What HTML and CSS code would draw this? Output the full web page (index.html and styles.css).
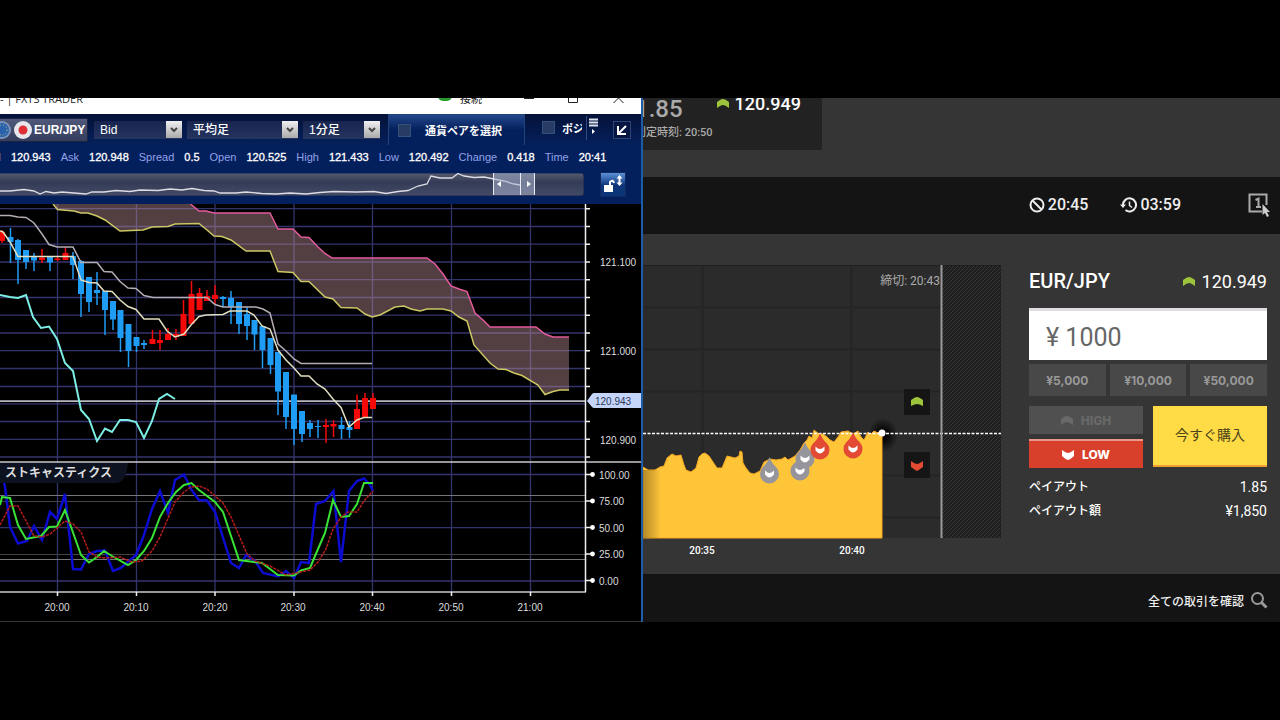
FILE: index.html
```html
<!DOCTYPE html>
<html lang="ja">
<head>
<meta charset="utf-8">
<title>FXTS TRADER</title>
<link rel="stylesheet" href="styles.css">
</head>
<body>
<main class="screen">
  <section class="trader">
    <header class="titlebar">
      <span class="titlebar-name">- | FXTS TRADER</span>
      <span class="titlebar-mid"><i class="green-dot"></i>接続</span>
      <svg class="window-icons" width="110" height="16" viewBox="520 98 110 16" fill="none" stroke="#222"><path d="M525 98.500h10M569.500 94v8.500h9V94M614.500 103l10-10M614.500 93l10 10"/></svg>
    </header>
    <div class="toolbar">
      <button class="pair"><svg width="34" height="20" viewBox="0 0 34 20"><circle cx="2" cy="10" r="9" fill="#7a91b8"/><circle cx="2" cy="10" r="7" fill="#2862ae"/><circle cx="2" cy="10" r="5" fill="none" stroke="#cfc46a" stroke-dasharray="1 2"/><circle cx="23" cy="10" r="9" fill="#e6e6ec"/><circle cx="23" cy="10" r="4.500" fill="#de2f35"/></svg>EUR/JPY</button>
      <label class="drop drop-bid"><select aria-label="価格"><option>Bid</option></select><svg viewBox="0 0 16 16"><path d="M5 6.500l3 3 3-3"/></svg></label>
      <label class="drop drop-type"><select aria-label="足種"><option>平均足</option></select><svg viewBox="0 0 16 16"><path d="M5 6.500l3 3 3-3"/></svg></label>
      <label class="drop drop-span"><select aria-label="時間足"><option>1分足</option></select><svg viewBox="0 0 16 16"><path d="M5 6.500l3 3 3-3"/></svg></label>
      <label class="tab"><input type="checkbox">通貨ペアを選択</label>
      <label class="tab tab-position"><input type="checkbox"><span>ポジ</span></label>
      <svg class="list-icon" width="12" height="24" viewBox="0 0 12 24"><path d="M.5 0v24" stroke="#304b80"/><path d="M3 3.500h9M3 6.500h9M3 9.500h9" stroke="#dce0ec" stroke-width="2"/><path d="M6 13l3 2.500-3 2.500z" fill="#fff"/></svg>
      <button class="shrink" aria-label="縮小"><svg width="16" height="16" viewBox="0 0 16 16" fill="none" stroke="#fff" stroke-width="2"><path d="M12 4L5 11M4 4v8h8"/></svg></button>
    </div>
    <dl class="quotes">
      <dt>Bid</dt><dd>120.943</dd><dt>Ask</dt><dd>120.948</dd><dt>Spread</dt><dd>0.5</dd><dt>Open</dt><dd>120.525</dd><dt>High</dt><dd>121.433</dd><dt>Low</dt><dd>120.492</dd><dt>Change</dt><dd>0.418</dd><dt>Time</dt><dd>20:41</dd>
    </dl>
    <div class="overview">
      <svg class="overview-chart" viewBox="0 173 584 23">
        <defs><linearGradient id="bar" x2="0" y2="1"><stop stop-color="#555b6e"/><stop offset=".4" stop-color="#343b56"/><stop offset="1" stop-color="#444b66"/></linearGradient></defs>
        <rect x="-4" y="173" width="588" height="23" rx="3" fill="url(#bar)" stroke="#16264e"/>
        <path d="M0 191L10 191 24 189.500 34 191 40 194 46 191.500 54 193 62 192 74 193 86 194 92 192 104 192 116 190.500 130 191.500 140 190 158 190.500 170 189 182 190 192 188.500 204 190.500 214 191 220 193 236 193 246 192 262 193.500 276 194 290 193 306 194 320 192.500 334 191.500 356 192 374 191.500 386 193.500 398 191.500 408 190.500 418 186 427 184 431 176 440 178 452 178 458 173.500 464 176 474 177.500 484 177 494 179 504 181 514 184 520 185" fill="none" stroke="#dcdce4" stroke-width="1.300"/>
        <rect x="493" y="173" width="42" height="22" fill="#a9b2ce" fill-opacity=".55"/><path d="M493.500 173v22M520.500 173v22M534.500 173v22" stroke="#e8ecf6"/><path d="M501 181v6l-4-3zM527 181v6l4-3z" fill="#fff"/>
      </svg>
      <button class="lock" aria-label="ロック解除"><svg width="24" height="23" viewBox="0 0 24 23"><path d="M3 12h9v7H3z" fill="#fff"/><path d="M9 12V9q3-3 4 1" fill="none" stroke="#fff" stroke-width="2"/><path d="M18.500 2l3 3.500h-2v4h2l-3 3.500-3-3.500h2v-4h-2z" fill="#fff"/></svg></button>
    </div>
    <svg class="fx-chart" id="fx" viewBox="0 204 641 418" role="img" aria-label="EUR/JPY 1分足">
      <rect y="204" width="641" height="418" fill="#000"/>
      <path stroke="#34346c" fill="none" stroke-width="1.300" d="M57.500 204v388M136.500 204v388M215 204v388M294 204v388M372.500 204v388M451.500 204v388M530.500 204v388M0 208.700h585M0 226.500h585M0 244.200h585M0 262h585M0 279.700h585M0 297.500h585M0 315.200h585M0 333h585M0 350.700h585M0 368.500h585M0 386.500h585M0 403.800h585M0 421.500h585M0 439.300h585M0 457h585M0 474.500h585M0 527.700h585M0 581h585"/>
      <path stroke="#77777b" d="M0 495.500h585M0 559.500h585"/><path stroke="#444448" d="M0 501.500h585M0 554.500h585"/>
      <path fill="#b88c92" fill-opacity=".45" d="M53 204L57.500 209.500 74 211 81 213 88 213 97 216 105 220 120 231 143 230 152 227 168 226.500 175 224 199 223.500 207 230 214 236 222 236.500 231 240 246 251 270 251 278 271.500 293 272.500 301 281.500 309 281.500 325 297 333 299 341 307.500 357 308 365 314 372 317 380 315 395 307 404 306 411 309 420 311 427 309 443 309 451 311 459 317 467 321 474 345 490 363 498 369 506 369.500 514 373 522 375.500 538 385 545 394.500 553 391.500 560 390 569 390V337L553 337 545 334 536 327 490 327 483 320 475 313 467 291.500 459 289 451 286 443 274 435 264 427 258 332 258 325 253.500 318 247 309 237.500 301 237 293 229 278 229 270 213 214 213 206 211 199 211 190.500 204z"/>
      <path d="M0 401.200h585" stroke="#b9b9c2" stroke-width="1.800"/>
      <g id="candles"></g>
      <g fill="none" stroke-width="1.500">
        <path stroke="#e35a9c" d="M190.500 204L199 211 206 211 214 213 270 213 278 229 293 229 301 237 309 237.500 318 247 325 253.500 332 258 427 258 435 264 443 274 451 286 459 289 467 291.500 475 313 483 320 490 327 536 327 545 334 553 337 569 337"/>
        <path stroke="#cbc764" d="M53 204L57.500 209.500 74 211 81 213 88 213 97 216 105 220 120 231 143 230 152 227 168 226.500 175 224 199 223.500 207 230 214 236 222 236.500 231 240 246 251 270 251 278 271.500 293 272.500 301 281.500 309 281.500 325 297 333 299 341 307.500 357 308 365 314 372 317 380 315 395 307 404 306 411 309 420 311 427 309 443 309 451 311 459 317 467 321 474 345 490 363 498 369 506 369.500 514 373 522 375.500 538 385 545 394.500 553 391.500 560 390 569 390"/>
        <path stroke="#b5adb5" d="M0 215.500L10 215.500 18 217 26 217.500 34 223 42 234 49 244.500 57 247 73 247 81 262.500 97 262.500 104 271.500 112 272 120 281.500 128 288 136 288.500 144 295.500 153 297.500 207 297.500 215 304.500 223 307 256 307 263 309 270 313 278 344 286 351 294 359 301 363.500 372 363.500"/>
        <path stroke="#e2dec0" d="M0 231L3 232 10 242 18 256.500 73 256.500 81 280 89 282.500 97 283 104 291 112 291.500 120 300 128 306.500 136 309.500 144 319 159 319 167 331 175 337 184 334 191 325 199 316.500 206 315 223 314.500 230 311 247 311 254 315 262 326 270 329 278 350 286 360 294 368 301 376 309 376 317 384 325 389 333 399 341 407.500 349 427 357 420 364 417.500 372 417.500"/>
        <path stroke="#7ceee4" stroke-width="2" d="M0 295L10 297 18 298 26 295 33 317 41 328 49 326.500 57 339 65 363 73 371 81 410 89 419 97 441 105 428.500 112 432 120 420 128 420 136 422 144 438 152 421 159 399 167 394 175 399"/>
        <path stroke="#0c0cd0" stroke-width="2.500" d="M2 474L5 487 10 527 18 543.500 27 541 34 526 42 540 50 512 57 519 65 494 73 569 81 569.500 89 554 97 551 105 550.500 113 571 121 568 136 555 144 535 152 509 160 491 168 513 175 480 184 474.500 191 489 199 500 207 500.500 215 512 231 563 239 568 246 555 255 561 263 573 278 576.500 286 571 294 578 301 562 309 563 316 504 325 501 333.500 491 341 562 349 491 357 481 364 478.500 370 485 373 491"/>
        <path stroke="#39e335" stroke-width="2" d="M0 505L2 497 10 498 18 525 26 539 41 536 49 527 57 526.500 65 510 81 555 89 562.500 97 557 104 551 112 556 128 565 136 560 144 551 152 538 160 517 168 503 176 492 184 485 191.500 483 199 490 215 502 223 512 239 560 262 563 278 575 294 575.500 301 570.500 310 568 318 549 325 533 333 500 341 517 349 516 357 504 364 483 373 483"/>
        <path stroke="#b81c1c" stroke-dasharray="3 1" d="M0 525L10 506 18 506 34 536 42 537 50 534 57 528 65 521 73 524 81 532 89 552 97 557 105 558 120 557 132 562 142 561 152 551 160 537 175 502 184 492 191 487 199 486 207 489 223 503 231 517 247 554 255 561 270 566 286 575 301 572 310 570 318 562 326 549 333 529 341 517 348 512 357 512 364 501 373 491"/>
      </g>
      <path stroke="#c9c9cc" stroke-width="1.600" d="M0 462h641M0 592h586"/>
      <path stroke="#f0f0f0" stroke-width="1.500" fill="none" d="M585.500 204v388M57.500 592v4M136.500 592v4M215 592v4M294 592v4M372.500 592v4M451.500 592v4M530.500 592v4M585 208.700h5M585 226.500h5M585 244.200h5M585 262h5M585 279.700h5M585 297.500h5M585 315.200h5M585 333h5M585 350.700h5M585 368.500h5M585 386.500h5M585 421.500h5M585 439.300h5M585 457h5M585 474.500h7M585 501h7M585 527.500h7M585 554h7M585 580.500h7"/>
      <g fill="#fff"><circle cx="592.500" cy="474.500" r="2.400"/><circle cx="592.500" cy="501" r="2.400"/><circle cx="592.500" cy="527.500" r="2.400"/><circle cx="592.500" cy="554" r="2.400"/><circle cx="592.500" cy="580.500" r="2.400"/></g>
      <path d="M0 463h128q-2 20-12 20H0z" fill="#0c1220"/>
      <path d="M0 621.500h641" stroke="#333"/>
      <text class="indicator" x="5" y="477">ストキャスティクス</text>
      <g class="axis"><text x="600" y="266">121.100</text><text x="600" y="355">121.000</text><text x="600" y="444">120.900</text><text x="599" y="479">100.00</text><text x="599" y="505">75.00</text><text x="599" y="532">50.00</text><text x="599" y="558">25.00</text><text x="599" y="585">0.00</text></g>
      <g class="axis axis-time"><text x="57" y="611">20:00</text><text x="136" y="611">20:10</text><text x="215" y="611">20:20</text><text x="293" y="611">20:30</text><text x="372" y="611">20:40</text><text x="451" y="611">20:50</text><text x="530" y="611">21:00</text></g>
      <path d="M587 401l5-7q1-1 2-1h47v15h-47q-1 0-2-1z" fill="#c5d5fa"/><text class="price-tag" x="595" y="405">120.943</text>
    </svg>
  </section>

  <section class="options">
    <div class="top-strip">
      <article class="option-card">
        <div class="card-line"><span class="card-rate">1.85</span><span class="card-price"><svg width="12" height="9" viewBox="0 0 12 9"><path d="M0 3Q4 0 6 0t6 3v6Q8 6 6 6T0 9z" fill="#9cc53b"/></svg>120.949</span></div>
        <p class="card-time">判定時刻: 20:50</p>
      </article>
    </div>
    <div class="status">
      <span class="status-item"><svg width="16" height="16" viewBox="0 0 16 16" fill="none" stroke="#eee" stroke-width="2"><circle cx="8" cy="8" r="6.500"/><path d="M3.500 3.500l9 9"/></svg>20:45</span>
      <span class="status-item"><svg width="17" height="16" viewBox="0 0 17 16" fill="none" stroke="#eee" stroke-width="2"><path d="M3 8a6.500 6.500 0 1 1 2.500 5"/><path d="M9.500 4.500V8.500l2.500 2" stroke-width="1.500"/><path d="M0 7.500h6l-3 3.500z" fill="#eee" stroke="none"/></svg>03:59</span>
      <button class="one-click" aria-label="ワンクリック"><svg width="22" height="24" viewBox="0 0 22 24"><path d="M14 18.500H1.500v-17h17V12" fill="none" stroke="#aaa" stroke-width="2"/><path d="M7.500 7l3-1.500V14M8 14h5" fill="none" stroke="#aaa" stroke-width="2"/><path d="M14.500 11v11l2.500-2 2 4 2-1-2-4h3z" fill="#ccc"/></svg></button>
    </div>
    <div class="trade">
      <svg class="option-chart" viewBox="643 265 358 293" role="img" aria-label="EUR/JPY レート">
        <defs><pattern id="hatch" width="4" height="4" patternUnits="userSpaceOnUse"><path d="M0 4L4 0" stroke="#383838" stroke-width="1"/></pattern><radialGradient id="glow"><stop offset=".2" stop-color="#000"/><stop offset="1" stop-color="#000" stop-opacity="0"/></radialGradient>
          <linearGradient id="shade"><stop stop-color="#000" stop-opacity=".3"/><stop offset="1" stop-color="#000" stop-opacity="0"/></linearGradient>
          <g id="pin"><path d="M0-17Q2-11 7-6.500A9.500 9.500 0 1 1-7-6.500Q-2-11 0-17z"/><path d="M-4.500-3.500Q-2-1 0-1t4.500-2.500v4Q2 3.500 0 3.500T-4.500.5z" fill="#fff"/></g></defs>
        <rect x="643" y="265" width="358" height="273" fill="#2b2b2b"/>
        <path d="M643 307.500h299M643 349.500h299M643 391.500h299M643 475.500h299M643 517.500h299M702.500 265v273M851.500 265v273" stroke="#252525" stroke-width="2"/>
        <rect x="942" y="265" width="59" height="273" fill="#1e1e1e"/><rect x="942" y="265" width="59" height="273" fill="url(#hatch)"/>
        <path d="M643.500 265.500h357.500v272.500" fill="none" stroke="#1f1f1f"/>
        <ellipse cx="883" cy="435" rx="15" ry="17" fill="url(#glow)"/>
        <path fill="#ffc539" stroke="#f5a623" d="M643 467L648 470 655 470 660 467 664 466 667 458 672 454 676 456 681 455 684 465 686 470 691 472 696 468 699 457 702 454 705 453 709 456 713 462 717 468 722 468 727 456 735 458 739 456 740 451 742 452 743 463 746 468 750 473 754 474 760 471 764 462 770 459 776 460 782 459 785 457 788 460 795 456 800 450 804 443 807 440 809 436 812 438 814 430 819 434 823 434 827 437 830 440 834 442 838 437 841 432 848 431 853 434 858 431 861 437 864 440 868 432 870 435 874 431 878 433 882 431V538H643z"/>
        <rect x="643" y="470" width="18" height="68" fill="url(#shade)"/>
        <path d="M643 433.500h358" stroke="#fff" stroke-width="1.300" stroke-dasharray="3 1.500"/>
        <path d="M941.500 265v273" stroke="#9a9a9a" stroke-width="2"/>
        <use href="#pin" x="769.500" y="474" fill="#96959c"/><use href="#pin" x="800" y="471" fill="#96959c"/><use href="#pin" x="805" y="459" fill="#96959c"/><use href="#pin" x="820" y="450" fill="#e34a33"/><use href="#pin" x="853" y="449" fill="#e34a33"/>
        <circle cx="882" cy="433" r="3.500" fill="#fff"/>
        <path d="M904 389h26v26h-26zM904 452h26v26h-26z" fill="#151515"/>
        <path d="M911 400q4-3 6-3t6 3v6q-4-2-6-2t-6 2z" fill="#9cc53b"/><path d="M911 461q4 3 6 3t6-3v6q-4 3-6 4-2-1-6-4z" fill="#e34a33"/>
        <text class="deadline" x="940" y="285">締切: 20:43</text>
        <g class="option-times"><text x="702" y="554">20:35</text><text x="852" y="554">20:40</text></g>
      </svg>
      <form class="order">
        <div class="order-head"><h2>EUR/JPY</h2><span class="order-price"><svg width="12" height="9" viewBox="0 0 12 9"><path d="M0 3Q4 0 6 0t6 3v6Q8 6 6 6T0 9z" fill="#9cc53b"/></svg>120.949</span></div>
        <input class="amount" type="text" value="¥ 1000" aria-label="金額">
        <div class="presets"><button type="button">¥5,000</button><button type="button">¥10,000</button><button type="button">¥50,000</button></div>
        <div class="actions">
          <div class="sides"><button type="button" class="high"><svg width="12" height="9" viewBox="0 0 12 9"><path d="M0 3Q4 0 6 0t6 3v6Q8 6 6 6T0 9z" fill="currentColor"/></svg>HIGH</button><button type="button" class="low"><svg width="12" height="10" viewBox="0 0 12 10"><path d="M0 0q4 3 6 3t6-3v6q-3 3-6 4Q3 9 0 6z" fill="currentColor"/></svg>LOW</button></div>
          <button type="button" class="buy">今すぐ購入</button>
        </div>
        <dl class="payout"><div><dt>ペイアウト</dt><dd>1.85</dd></div><div><dt>ペイアウト額</dt><dd>¥1,850</dd></div></dl>
      </form>
    </div>
    <footer class="all-trades"><a href="#">全ての取引を確認<svg width="18" height="18" viewBox="0 0 18 18" fill="none" stroke="#999"><circle cx="7.500" cy="7.500" r="5.500" stroke-width="2"/><path d="M11.500 11.500l5 5" stroke-width="3"/></svg></a></footer>
  </section>
</main>
<script src="chart.js"></script>
</body>
</html>
```
FILE: styles.css
```css
* { box-sizing: border-box; }
body { margin: 0; background: #000; color: #fff; font-family: Roboto, "Noto Sans CJK JP", sans-serif; }
button, input, select { font: inherit; color: inherit; border: 0; border-radius: 0; margin: 0; padding: 0; }
button { cursor: pointer; }
svg { display: block; flex: none; }
dl, dd, p, h2 { margin: 0; }

.screen { display: grid; grid-template-columns: 643fr 637fr; padding: 98px 0; }

.trader { display: flex; flex-direction: column; min-width: 0; overflow: hidden; background: #04205c; border-right: 2px solid #1c5ca8; font-family: "Liberation Sans", "Noto Sans CJK JP", sans-serif; }
.titlebar { display: flex; justify-content: space-between; height: 16px; overflow: hidden; background: #fff; color: #222; font: 11px/16px "Open Sans", "Noto Sans CJK JP", sans-serif; }
.titlebar-name, .titlebar-mid { margin-top: -7px; }
.titlebar-name { flex: 0 0 438px; }
.titlebar-mid { display: flex; flex: 1; gap: 8px; }
.green-dot { width: 14px; height: 10px; background: #259a2a; border-radius: 5px; }
.window-icons { margin-right: 12px; }

.toolbar { display: flex; align-items: center; height: 31px; background: linear-gradient(#051238, #04205c); font-size: 12px; font-weight: 500; white-space: nowrap; }
.pair { display: flex; align-items: center; height: 24px; width: 88px; margin-right: 6px; background: linear-gradient(#50597a, #343d5c); border: 1px solid #1a2342; border-left: 0; font-size: 12px; font-weight: bold; }
.drop { display: flex; height: 18px; margin-right: 5px; background: linear-gradient(#16244e, #263560); }
.drop select { flex: 1; min-width: 0; padding-left: 6px; appearance: none; background: none; }
.drop svg { width: 16px; height: 17px; background: linear-gradient(#f0f0f0, #aaa); fill: none; stroke: #444; stroke-width: 2; }
.drop-bid { width: 88px; }
.drop-type { width: 111px; }
.drop-span { width: 77px; margin-right: 8px; }
.tab { display: flex; align-items: center; align-self: stretch; gap: 14px; width: 137px; padding-left: 9px; border: solid #22427c; border-width: 1px 1px 0; background: linear-gradient(#24468a, #04205c 50%); font-size: 11px; font-weight: bold; }
.tab input { width: 13px; height: 13px; appearance: none; background: #263c64; border: 1px solid #355079; }
.tab-position { width: 64px; gap: 7px; padding: 0 0 4px 17px; background: none; border: 0; overflow: hidden; }
.tab-position span { width: 20px; overflow: hidden; }
.list-icon { margin: 0 auto 4px -3px; }
.shrink { margin-right: 10px; background: #061640; border: 1px solid #2c467c; }

.quotes { display: flex; align-items: center; gap: 10px; height: 25px; margin-left: -15px; padding-bottom: 2px; font-size: 11px; white-space: nowrap; }
.quotes dt { color: #93a2ea; }
.quotes dd { -webkit-text-stroke: 0.300px #fff; }

.overview { display: flex; align-items: center; justify-content: space-between; height: 34px; padding-bottom: 5px; }
.overview-chart { flex: 0 1 584px; min-width: 0; margin-right: 16px; }
.lock { margin-right: auto; background: linear-gradient(#5c90d8, #0c3478 55%); border: 1px solid #102a60; }

.fx-chart { width: 100%; }
.axis text { fill: #ddd; font-size: 10px; }
.axis-time text { text-anchor: middle; }
.indicator { fill: #ddd; font-size: 12px; font-weight: bold; }
.price-tag { fill: #2a3658; font-size: 10px; }

.options { display: flex; flex-direction: column; min-width: 0; background: #353535; }
.top-strip { height: 79px; overflow: hidden; }
.option-card { width: 179px; height: 52px; padding-right: 21px; background: #222; }
.card-line { display: flex; justify-content: space-between; margin-left: -8px; height: 25px; }
.card-rate { color: #aaa; font-size: 24px; line-height: 22px; font-weight: 500; }
.card-price { display: flex; align-items: center; gap: 6px; height: 10px; font-size: 18px; font-weight: 500; }
.card-time { margin-left: -8px; color: #aaa; font-size: 11px; font-weight: 500; line-height: 20px; white-space: nowrap; }
.status { display: flex; align-items: center; gap: 32px; height: 57px; padding: 0 10px 2px 0; background: #141414; justify-content: flex-end; font-size: 16px; font-weight: 500; color: #eee; }
.status-item { display: flex; align-items: center; gap: 3px; }
.one-click { margin-left: 35px; background: none; }

.trade { display: flex; gap: 28px; padding: 31px 13px 16px 0; }
.option-chart { flex: 1; min-width: 0; align-self: flex-start; }
.deadline { fill: #aaa; font-size: 12px; text-anchor: end; }
.option-times text { fill: #fff; font: 500 10px Roboto, sans-serif; text-anchor: middle; }
.order { flex: 0 0 238px; }
.order-head { display: flex; align-items: center; justify-content: space-between; height: 32px; margin-bottom: 11px; }
.order-head h2 { font-size: 20px; font-weight: 500; }
.order-price { display: flex; align-items: center; gap: 7px; font-size: 18px; }
.amount { display: block; width: 100%; height: 52px; padding: 4px 17px 0; border-top: 3px solid #e2dde2; background: #fff; color: #666; font-size: 25px; }
.presets { display: grid; grid-template-columns: repeat(3, 1fr); gap: 4px; margin: 4px 0 10px; }
.presets button { height: 32px; background: #484848; color: #999; font: bold 12px Inter, sans-serif; }
.actions { display: grid; grid-template-columns: 1fr 1fr; gap: 10px; }
.sides { display: grid; gap: 5px; }
.sides button { display: flex; align-items: center; justify-content: center; gap: 8px; height: 28px; font: 800 12px Inter, sans-serif; }
.sides .high { background: #505050; color: #696969; }
.sides .low { height: 29px; background: #d8402b; border-top: 2px solid #e99788; }
.buy { height: 61px; padding-bottom: 4px; background: #ffdc45; border-bottom: 2px solid #f0a030; color: #4d431a; font-size: 14px; }
.payout { margin-top: 7px; font-size: 14px; line-height: 24px; }
.payout div { display: flex; justify-content: space-between; }
.payout dt { font-size: 12px; font-weight: 500; }

.all-trades { display: flex; flex: 1; align-items: center; justify-content: flex-end; min-height: 47px; padding: 4px 12px 0 0; background: #141414; }
.all-trades a { display: flex; align-items: center; gap: 6px; color: #eee; font-size: 12px; font-weight: 500; text-decoration: none; }
```
FILE: chart.js
```javascript
// x, high, body top, body bottom, low, rising
const candles = [
  [2,230,232,241,243,1],[10.5,228,237,242,263,0],[18,239,240,260,284,0],[26,250,250,262,269,0],[34,253,256.5,260.5,271,0],
  [42,249,257.5,260,263,1],[50,256,257,262.5,271,0],[57.5,257,258.5,260,261,1],[65.5,247,253,260,260,1],[73,252,256,265,279,0],
  [81,260,261,294,317,0],[89,277,277,302,312,0],[97,272,290,293,305,0],[105,291,291,310,335,0],[113,301,301,319.5,330,0],
  [120.5,310,310,338,352,0],[128.5,324,324,351,367,0],[136.5,337,337,346,352,0],[144,340,343,345,349,0],[152.5,330,339,344,344,1],
  [160,330,340,343,350,1],[168,328,334,340,340,1],[176,329,334,337,340,1],[183.5,300,314,336,336,1],[191.5,281,294,324,324,1],
  [199.5,288,293,310,310,1],[207,290,296,301,301,1],[215,285,295,299,304,1],[223,296,297,299,307,0],[231,291,298,307,324,0],
  [239,302,302,324,334,0],[247,307,314,326,340,0],[254.5,320,320,334.5,350,0],[262.5,326,326,350,368,0],[270.5,338,338,365,374,0],
  [278,352,352,391.5,415,0],[286,372,372,417,429,0],[294,394.5,394.5,429,445,0],[302,411,411,434,442,0],[310,420,423,429,437,0],
  [318,420,426,427,438,0],[326,419,425,427,443,1],[333.5,420,424,426.5,437,1],[341.5,417,425,429,439,0],[349.5,421,427,430,438,0],
  [357,394.5,409,429,429,1],[365,393,398,417,418,1],[373,393,398,409,409,1]
];
const layer = document.getElementById("candles");
for (const [x, high, top, bottom, low, up] of candles) {
  const p = document.createElementNS("http://www.w3.org/2000/svg", "path");
  p.setAttribute("d", `M${x - 3} ${top}h6V${bottom}h-6zM${x - 0.75} ${high}h1.5V${low}h-1.5z`);
  p.setAttribute("fill", up ? "#f40808" : "#1f9cf4");
  layer.append(p);
}
```
